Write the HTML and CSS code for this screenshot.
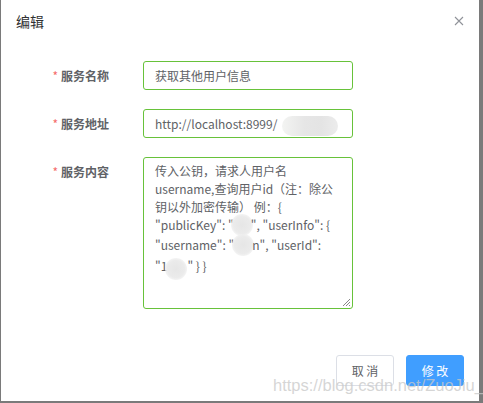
FILE: index.html
```html
<!DOCTYPE html>
<html lang="zh-CN">
<head>
<meta charset="utf-8">
<title>编辑</title>
<link rel="stylesheet" href="styles.css">
</head>
<body>
<div class="dialog">
  <div class="header">
    <span class="title">编辑</span>
    <svg class="close" width="10" height="10" viewBox="0 0 10 10"><path d="M1 1L9 9M9 1L1 9" stroke="#909399" stroke-width="1.1" fill="none"/></svg>
  </div>
  <div class="body">
    <div class="row">
      <label class="label"><span class="star">*</span>服务名称</label>
      <div class="input">获取其他用户信息</div>
    </div>
    <div class="row">
      <label class="label"><span class="star">*</span>服务地址</label>
      <div class="input">http://localhost:8999/<span class="blob-wide"></span></div>
    </div>
    <div class="row">
      <label class="label"><span class="star">*</span>服务内容</label>
      <div class="textarea">
        <div class="line">传入公钥，请求人用户名</div>
        <div class="line">username,查询用户id（注：除公</div>
        <div class="line">钥以外加密传输） 例：{</div>
        <div class="line">"publicKey": "<span class="blob b1"></span>", "userInfo": {</div>
        <div class="line">"username": "<span class="blob b2"></span>n", "userId":</div>
        <div class="line">"1<span class="blob b3"></span>" } }</div>
        <svg class="grip" width="9" height="9" viewBox="0 0 9 9"><path d="M8 1L1 8M8 4L4 8M8 7L7 8" stroke="#888" stroke-width="1" fill="none"/></svg>
      </div>
    </div>
  </div>
  <div class="footer">
    <button class="btn btn-default">取 消</button>
    <button class="btn btn-primary">修 改</button>
    <span class="watermark">https://blog.csdn.net/ZuoJiu_</span>
  </div>
</div>
</body>
</html>
```
FILE: styles.css
```css
html, body {
  margin: 0;
  padding: 0;
  background: #7a7a7a;
}
body {
  font-family: "Noto Sans CJK SC", "Noto Sans", sans-serif;
  color: #606266;
}
.dialog {
  margin-left: 1px;
  width: 478px;
  height: 401px;
  background: #fff;
  display: flex;
  flex-direction: column;
  position: relative;
}
.header {
  height: 40px;
  padding: 1px 15px 0 15px;
  display: flex;
  align-items: center;
  justify-content: space-between;
  box-sizing: border-box;
}
.title {
  font-size: 14px;
  line-height: 18px;
  color: #303133;
}
.close {
  display: block;
}
.body {
  padding-top: 21px;
  display: flex;
  flex-direction: column;
  gap: 18px;
}
.row {
  display: flex;
  align-items: flex-start;
}
.label {
  width: 108px;
  box-sizing: border-box;
  text-align: right;
  font-size: 12px;
  font-weight: 700;
  line-height: 30px;
  color: #606266;
  margin-right: 34px;
}
.star {
  color: #f56c6c;
  font-weight: 400;
  margin-right: 3px;
}
.input {
  width: 210px;
  height: 29px;
  box-sizing: border-box;
  border: 1px solid #67c23a;
  border-radius: 3px;
  padding: 0 11px;
  font-size: 12px;
  line-height: 27px;
  color: #606266;
  white-space: nowrap;
  overflow: hidden;
}
.blob-wide {
  display: inline-block;
  vertical-align: middle;
  width: 56px;
  height: 20px;
  margin-left: 5px;
  border-radius: 10px;
  background: linear-gradient(90deg, #f3f4f2, #e6e6e6 40%, #e4e4e4 70%, #ececec);
}
.textarea {
  width: 210px;
  height: 152px;
  box-sizing: border-box;
  border: 1px solid #67c23a;
  border-radius: 3px;
  padding: 4px 11px;
  font-size: 12px;
  line-height: 18px;
  color: #606266;
  position: relative;
}
.line {
  white-space: nowrap;
}
.blob {
  display: inline-block;
  vertical-align: middle;
  border-radius: 50%;
  background: radial-gradient(circle, #e6e6e6 0%, #ebebeb 55%, rgba(240,240,240,0.6) 75%, rgba(255,255,255,0) 100%);
}
.b1 {
  width: 22px;
  height: 22px;
  margin: -4px -2px 0 -3px;
}
.b2 {
  width: 22px;
  height: 22px;
  margin: -2px -2px 0 -2px;
}
.b3 {
  width: 22px;
  height: 22px;
  margin: 2px 0 0 -2px;
}
.grip {
  position: absolute;
  right: 1px;
  bottom: 1px;
}
.footer {
  margin-top: auto;
  padding: 0 15px 15px 0;
  display: flex;
  justify-content: flex-end;
  gap: 12px;
  position: relative;
}
.btn {
  width: 58px;
  height: 31px;
  box-sizing: border-box;
  border-radius: 3px;
  font-family: "Noto Sans CJK SC", sans-serif;
  font-size: 12px;
  padding: 0;
  cursor: pointer;
}
.btn-default {
  background: #fff;
  border: 1px solid #dcdfe6;
  color: #606266;
}
.btn-primary {
  background: #409eff;
  border: 1px solid #409eff;
  color: #fff;
}
.watermark {
  position: absolute;
  left: 272px;
  bottom: 6px;
  font-family: "Liberation Sans", Arial, sans-serif;
  font-size: 16.5px;
  line-height: 20px;
  color: rgba(200, 200, 200, 0.75);
  white-space: nowrap;
  pointer-events: none;
}
```
